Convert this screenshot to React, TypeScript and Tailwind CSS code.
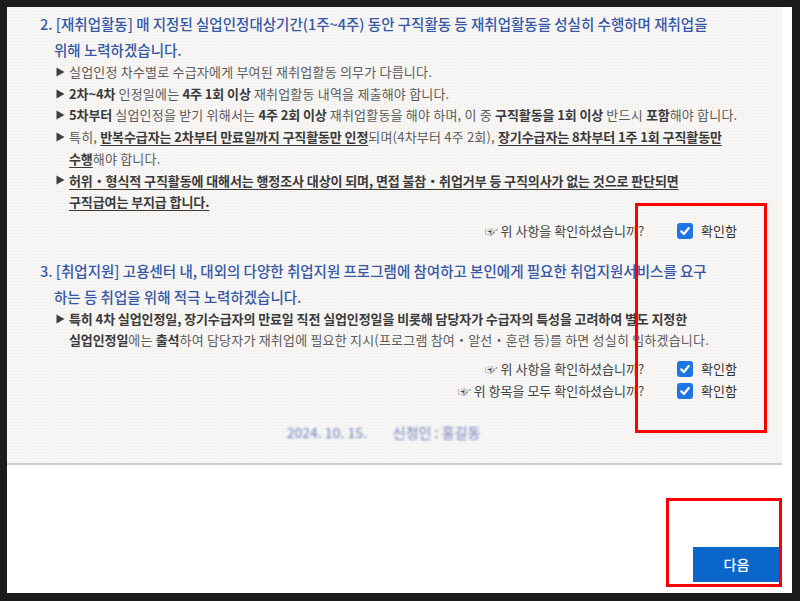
import React from "react";

const Tri = () => (
  <svg width="9" height="10" viewBox="0 0 9 10" className="block">
    <path d="M0.5 0.5 L8.5 5 L0.5 9.5 Z" fill="#3f3f3f" />
  </svg>
);

const Bullet = ({ children, lh = "h-[21.7px]" }: { children: React.ReactNode; lh?: string }) => (
  <div className="flex">
    <span className={`w-[14px] shrink-0 flex items-center ${lh} pl-[1px]`}>
      <Tri />
    </span>
    <div>{children}</div>
  </div>
);

const B = ({ children }: { children: React.ReactNode }) => (
  <span className="font-bold text-[#3a3a3a] tracking-[-0.1px]">{children}</span>
);

const U = ({ children }: { children: React.ReactNode }) => (
  <span className="font-bold text-[#3a3a3a] tracking-[-0.1px] underline underline-offset-[3px] decoration-[1px]">{children}</span>
);

const Check = () => (
  <span className="inline-flex w-[16px] h-[16px] rounded-[3px] bg-[#1f74e6] items-center justify-center">
    <svg width="12" height="12" viewBox="0 0 12 12">
      <path d="M2.3 6.4 L4.9 9 L9.8 3" stroke="white" strokeWidth="2.2" fill="none" strokeLinecap="round" strokeLinejoin="round" />
    </svg>
  </span>
);

const Confirm = ({ label }: { label: string }) => (
  <div className="flex justify-end items-center h-[22px] pr-[45px] text-[13px] text-[#444]">
    <span>{label}</span>
    <span className="ml-[33px] flex items-center">
      <Check />
    </span>
    <span className="ml-[8px] text-[#333]">확인함</span>
  </div>
);

export default function App() {
  return (
    <div className="relative w-[800px] h-[601px] bg-[#1c1c1c] pt-[7px] pl-[7px] font-['Noto_Sans_CJK_KR','Noto_Sans',sans-serif] overflow-hidden">
      <div className="w-[785px] h-[586px] bg-white flex flex-col">
        <div className="w-[775px] h-[458px] border-b-2 border-[#cdcdcd] bg-[#f7f6f4] bg-[radial-gradient(circle,#ecebe8_0.7px,transparent_0.8px)] bg-[length:3px_3px] pt-[4px]">
          {/* Section 2 */}
          <div className="pl-[47px] indent-[-14px] text-[14.5px] leading-[26px] text-[#3657a7] font-medium whitespace-nowrap">
            2. [재취업활동] 매 지정된 실업인정대상기간(1주~4주) 동안 구직활동 등 재취업활동을 성실히 수행하며 재취업을
            <br />
            위해 노력하겠습니다.
          </div>
          <div className="mt-[-2px] pl-[48px] text-[13px] tracking-[0.2px] leading-[21.7px] text-[#5c5c5c] whitespace-nowrap">
            <Bullet>실업인정 차수별로 수급자에게 부여된 재취업활동 의무가 다릅니다.</Bullet>
            <Bullet>
              <B>2차~4차</B> 인정일에는 <B>4주 1회 이상</B> 재취업활동 내역을 제출해야 합니다.
            </Bullet>
            <Bullet>
              <B>5차부터</B> 실업인정을 받기 위해서는 <B>4주 2회 이상</B> 재취업활동을 해야 하며, 이 중 <B>구직활동을 1회 이상</B> 반드시 <B>포함</B>해야 합니다.
            </Bullet>
            <Bullet>
              특히, <U>반복수급자는 2차부터 만료일까지 구직활동만 인정</U>되며(4차부터 4주 2회), <U>장기수급자는 8차부터 1주 1회 구직활동만</U>
              <br />
              <U>수행</U>해야 합니다.
            </Bullet>
            <Bullet>
              <U>허위・형식적 구직활동에 대해서는 행정조사 대상이 되며, 면접 불참・취업거부 등 구직의사가 없는 것으로 판단되면</U>
              <br />
              <U>구직급여는 부지급 합니다.</U>
            </Bullet>
          </div>
          <div className="mt-[7px]">
            <Confirm label="☞ 위 사항을 확인하셨습니까?" />
          </div>

          {/* Section 3 */}
          <div className="mt-[16px] pl-[47px] indent-[-14px] text-[14.5px] leading-[26px] text-[#3657a7] font-medium whitespace-nowrap">
            3. [취업지원] 고용센터 내, 대외의 다양한 취업지원 프로그램에 참여하고 본인에게 필요한 취업지원서비스를 요구
            <br />
            하는 등 취업을 위해 적극 노력하겠습니다.
          </div>
          <div className="mt-[-2px] pl-[48px] text-[13px] tracking-[0.2px] leading-[21.5px] text-[#5c5c5c] whitespace-nowrap">
            <Bullet lh="h-[21.5px]">
              <B>특히 4차 실업인정일, 장기수급자의 만료일 직전 실업인정일을 비롯해 담당자가 수급자의 특성을 고려하여 별도 지정한</B>
              <br />
              <B>실업인정일</B>에는 <B>출석</B>하여 담당자가 재취업에 필요한 지시(프로그램 참여・알선・훈련 등)를 하면 성실히 임하겠습니다.
            </Bullet>
          </div>
          <div className="mt-[7px]">
            <Confirm label="☞ 위 사항을 확인하셨습니까?" />
            <Confirm label="☞ 위 항목을 모두 확인하셨습니까?" />
          </div>

          <div className="mt-[22px] flex justify-center gap-[26px] pr-[22px] h-[18px] items-center text-[14px] text-[#6c7fbf] blur-[1.2px]">
            <span>2024. 10. 15.</span>
            <span>신청인 : 홍길동</span>
          </div>
        </div>

        <div className="flex-1 flex justify-end items-end pr-[12px] pb-[11px]">
          <button className="w-[87px] h-[35px] bg-[#0a66c8] text-white text-[14px] font-medium">다음</button>
        </div>
      </div>

      {/* annotation rectangles */}
      <div className="absolute left-[635px] top-[203px] w-[132px] h-[230px] border-[3px] border-[#ff0000] pointer-events-none" />
      <div className="absolute left-[666px] top-[498px] w-[116px] h-[89px] border-[3px] border-[#ff0000] pointer-events-none" />
    </div>
  );
}
